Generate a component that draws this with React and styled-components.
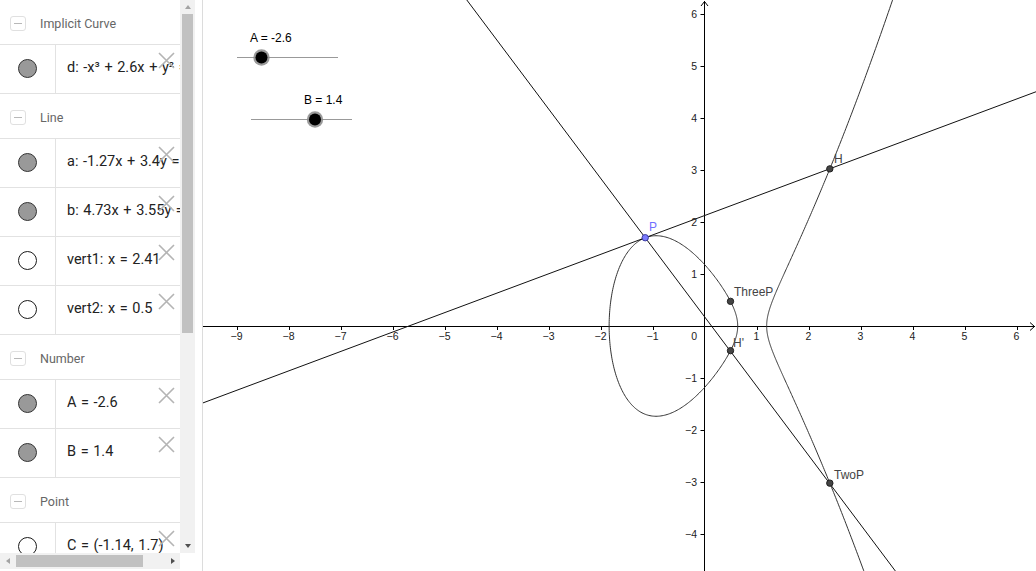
import React from "react";
import styled, { createGlobalStyle } from "styled-components";

const GlobalStyle = createGlobalStyle`
  html, body { margin: 0; padding: 0; background: #fff; overflow: hidden; }
  body { font-family: Roboto, "Liberation Sans", Arial, sans-serif; }
`;

const G = 203;
const W = 1036 - G;
const H = 571;
const S = 52;
const OX = 704.5 - G;
const OY = 326;
const sx = (x) => OX + S * x;
const sy = (y) => OY - S * y;

const f = (x) => x * x * x - 2.6 * x + 1.4;
const root = (a, b) => {
  let lo = a, hi = b;
  const flo = f(lo);
  for (let i = 0; i < 60; i++) {
    const m = (lo + hi) / 2;
    if (Math.sign(f(m)) === Math.sign(flo)) lo = m; else hi = m;
  }
  return (lo + hi) / 2;
};
const r1 = root(-2.2, -1.5);
const r2 = root(0.3, 0.9);
const r3 = root(1.0, 1.5);

const ovalPath = (() => {
  const N = 160;
  const up = [], down = [];
  for (let i = 0; i <= N; i++) {
    const t = (Math.PI * i) / N;
    const x = r1 + ((r2 - r1) * (1 - Math.cos(t))) / 2;
    const y = Math.sqrt(Math.max(0, f(x)));
    up.push([sx(x), sy(y)]);
    down.push([sx(x), sy(-y)]);
  }
  const pts = up.concat(down.reverse());
  return "M" + pts.map((p) => p[0].toFixed(2) + " " + p[1].toFixed(2)).join(" L") + " Z";
})();

const branchPath = (() => {
  const N = 200;
  const xmax = 3.9;
  const pts = [];
  for (let i = -N; i <= N; i++) {
    const s = i / N;
    const x = r3 + s * s * (xmax - r3);
    const y = Math.sign(s) * Math.sqrt(Math.max(0, f(x)));
    pts.push([sx(x), sy(y)]);
  }
  return "M" + pts.map((p) => p[0].toFixed(2) + " " + p[1].toFixed(2)).join(" L");
})();

// line a: -1.27x + 3.4y = 7.22 ; line b: 4.73x + 3.55y = 0.636
const lineA = (x) => (7.22 + 1.27 * x) / 3.4;
const lineB = (x) => (0.636 - 4.73 * x) / 3.55;
const xL = (0 - OX) / S;
const xR = (W - OX) / S;

const P = [-1.14, Math.sqrt(f(-1.14))];
const Hpt = [2.41, Math.sqrt(f(2.41))];
const ThreeP = [0.5, Math.sqrt(f(0.5))];
const Hp = [0.5, -Math.sqrt(f(0.5))];
const TwoP = [2.41, -Math.sqrt(f(2.41))];

const xTicks = [-9, -8, -7, -6, -5, -4, -3, -2, -1, 1, 2, 3, 4, 5, 6];
const yTicks = [-4, -3, -2, -1, 1, 2, 3, 4, 5, 6];

const Page = styled.div`
  display: flex;
  width: 1036px;
  height: 571px;
  background: #fff;
  overflow: hidden;
`;

const AlgebraView = styled.div`
  flex: none;
  width: 202px;
  height: 571px;
  border-right: 1px solid #dcdcdc;
  display: grid;
  grid-template-columns: 180px 15px 7px;
  grid-template-rows: 553px 16px 2px;
  background: #fff;
`;

const List = styled.div`
  grid-column: 1;
  grid-row: 1;
  overflow: hidden;
  display: flex;
  flex-direction: column;
`;

const GroupHeader = styled.div`
  flex: none;
  height: 45px;
  box-sizing: border-box;
  padding: 3px 0 0 10px;
  border-bottom: 1px solid #e2e2e2;
  display: flex;
  align-items: center;
  gap: 14px;
  color: #666;
  font-size: 12.5px;
  white-space: nowrap;
`;

const ToggleBox = styled.span`
  flex: none;
  width: 16px;
  height: 15px;
  box-sizing: border-box;
  border: 1px solid #e0e0e0;
  border-radius: 3px;
  display: flex;
  align-items: center;
  justify-content: center;
  &::before {
    content: "";
    width: 8px;
    height: 1.5px;
    background: #b8b8b8;
  }
`;

const ItemRow = styled.div`
  flex: none;
  position: relative;
  height: 49px;
  box-sizing: border-box;
  border-bottom: 1px solid #e2e2e2;
  display: flex;
  align-items: stretch;
`;

const MarbleCell = styled.div`
  flex: none;
  width: 56px;
  box-sizing: border-box;
  padding-bottom: 1px;
  border-right: 1px solid #e2e2e2;
  display: flex;
  align-items: center;
  justify-content: center;
`;

const Marble = styled.span`
  width: 19px;
  height: 19px;
  box-sizing: border-box;
  border-radius: 50%;
  border: 1px solid ${(p) => (p.$shown ? "#333" : "#1a1a1a")};
  background: ${(p) => (p.$shown ? "#999" : "#fff")};
`;

const ItemText = styled.div`
  align-self: center;
  padding: 0 0 3px 11px;
  white-space: nowrap;
  font-size: 14.5px;
  color: #222;
  word-spacing: 1px;
`;

const DeleteButton = styled.span`
  position: absolute;
  top: 7px;
  right: 5px;
  width: 17px;
  height: 17px;
  display: block;
`;

const VScroll = styled.div`
  grid-column: 2;
  grid-row: 1;
  background: #f1f1f1;
  display: flex;
  flex-direction: column;
  align-items: center;
`;

const ArrowBtn = styled.span`
  flex: none;
  width: 15px;
  height: 14px;
  display: flex;
  align-items: center;
  justify-content: center;
  &::before {
    content: "";
    width: 0;
    height: 0;
    ${(p) =>
      p.$dir === "up"
        ? `border-left: 3.5px solid transparent; border-right: 3.5px solid transparent; border-bottom: 4px solid ${p.$c};`
        : p.$dir === "down"
        ? `border-left: 3.5px solid transparent; border-right: 3.5px solid transparent; border-top: 4px solid ${p.$c};`
        : p.$dir === "left"
        ? `border-top: 3.5px solid transparent; border-bottom: 3.5px solid transparent; border-right: 4px solid ${p.$c};`
        : `border-top: 3.5px solid transparent; border-bottom: 3.5px solid transparent; border-left: 4px solid ${p.$c};`}
  }
`;

const VTrack = styled.div`
  flex: 1;
  width: 100%;
`;

const VThumb = styled.div`
  margin: 0 2px 0 2px;
  height: 319px;
  background: #c1c1c1;
`;

const HScroll = styled.div`
  grid-column: 1;
  grid-row: 2;
  background: #f1f1f1;
  display: flex;
  align-items: center;
`;

const HTrack = styled.div`
  flex: 1;
  height: 100%;
  display: flex;
  align-items: center;
`;

const HThumb = styled.div`
  margin-left: 1px;
  width: 127px;
  height: 12px;
  background: #c1c1c1;
`;

const Graphics = styled.div`
  flex: 1;
  height: 571px;
  overflow: hidden;
  background: #fff;
`;

const Canvas = styled.svg`
  display: block;
  font-family: "Liberation Sans", Arial, sans-serif;
`;

const DeleteIcon = () => (
  <DeleteButton>
    <svg width="17" height="17" viewBox="0 0 17 17">
      <path d="M1 1 L16 16 M16 1 L1 16" stroke="#b4b4b4" strokeWidth="1.6" fill="none" />
    </svg>
  </DeleteButton>
);

const Header = ({ children }) => (
  <GroupHeader>
    <ToggleBox />
    <span>{children}</span>
  </GroupHeader>
);

const Item = ({ shown, children }) => (
  <ItemRow>
    <MarbleCell>
      <Marble $shown={shown} />
    </MarbleCell>
    <ItemText>{children}</ItemText>
    <DeleteIcon />
  </ItemRow>
);

const Point = ({ p, fill = "#444", stroke = "#222", r = 3.2 }) => (
  <circle cx={sx(p[0])} cy={sy(p[1])} r={r} fill={fill} stroke={stroke} strokeWidth="1" />
);

const Slider = ({ x1, x2, y, knob, label, lx, ly }) => (
  <g>
    <text x={lx - G} y={ly} fontSize="12" fill="#000">{label}</text>
    <line x1={x1 - G} y1={y} x2={x2 - G} y2={y} stroke="#999" strokeWidth="1" />
    <circle cx={knob - G} cy={y} r="8.2" fill="#8a8a8a" opacity="0.85" />
    <circle cx={knob - G} cy={y} r="6" fill="#000" />
  </g>
);

export default function App() {
  return (
    <>
      <GlobalStyle />
      <Page>
        <AlgebraView>
          <List>
            <Header>Implicit Curve</Header>
            <Item shown>d: -x³ + 2.6x + y² = 1.4</Item>
            <Header>Line</Header>
            <Item shown>a: -1.27x + 3.4y = 7.22</Item>
            <Item shown>b: 4.73x + 3.55y = 0.64</Item>
            <Item>vert1: x = 2.41</Item>
            <Item>vert2: x = 0.5</Item>
            <Header>Number</Header>
            <Item shown>A = -2.6</Item>
            <Item shown>B = 1.4</Item>
            <Header>Point</Header>
            <Item>C = (-1.14, 1.7)</Item>
          </List>
          <VScroll>
            <ArrowBtn $dir="up" $c="#a3a3a3" />
            <VTrack>
              <VThumb />
            </VTrack>
            <ArrowBtn $dir="down" $c="#505050" />
          </VScroll>
          <HScroll>
            <ArrowBtn $dir="left" $c="#a3a3a3" />
            <HTrack>
              <HThumb />
            </HTrack>
            <ArrowBtn $dir="right" $c="#505050" />
          </HScroll>
        </AlgebraView>
        <Graphics>
          <Canvas width={W} height={H} viewBox={`0 0 ${W} ${H}`}>
            {/* axes */}
            <line x1="0" y1={OY + 0.5} x2={W - 1} y2={OY + 0.5} stroke="#000" strokeWidth="1" />
            <path d={`M${W - 6} ${OY - 3.5} L${W - 1.5} ${OY + 0.5} L${W - 6} ${OY + 4.5}`} stroke="#000" fill="none" strokeWidth="1" />
            <line x1={OX} y1="1" x2={OX} y2={H} stroke="#000" strokeWidth="1" />
            <path d={`M${OX - 3.5} 6 L${OX} 1.5 L${OX + 3.5} 6`} stroke="#000" fill="none" strokeWidth="1" />
            {xTicks.map((t) => (
              <g key={"x" + t}>
                <line x1={Math.round(sx(t)) + 0.5} y1={OY + 1} x2={Math.round(sx(t)) + 0.5} y2={OY + 4} stroke="#000" strokeWidth="1" />
                <text x={sx(t)} y={OY + 14} fontSize="10.5" fill="#222" textAnchor="middle">
                  {t < 0 ? "\u2212" + -t : String(t)}
                </text>
              </g>
            ))}
            {yTicks.map((t) => (
              <g key={"y" + t}>
                <line x1={OX - 4} y1={Math.round(sy(t)) + 0.5} x2={OX} y2={Math.round(sy(t)) + 0.5} stroke="#000" strokeWidth="1" />
                <text x={697 - G} y={sy(t) + 4} fontSize="10.5" fill="#222" textAnchor="end">
                  {t < 0 ? "\u2212" + -t : String(t)}
                </text>
              </g>
            ))}
            <text x={697 - G} y={OY + 14} fontSize="10.5" fill="#222" textAnchor="end">0</text>

            {/* curve */}
            <path d={ovalPath} stroke="#333" strokeWidth="1" fill="none" />
            <path d={branchPath} stroke="#333" strokeWidth="1" fill="none" />

            {/* lines */}
            <line x1={sx(xL)} y1={sy(lineA(xL))} x2={sx(xR)} y2={sy(lineA(xR))} stroke="#111" strokeWidth="1" />
            <line x1={sx(-6)} y1={sy(lineB(-6))} x2={sx(5)} y2={sy(lineB(5))} stroke="#111" strokeWidth="1" />

            {/* points */}
            <Point p={Hpt} />
            <Point p={ThreeP} />
            <Point p={Hp} />
            <Point p={TwoP} />
            <Point p={P} fill="#7b7bff" stroke="#3c3ca0" />

            <text x={834 - G} y="163" fontSize="12" fill="#444">H</text>
            <text x={734 - G} y="296" fontSize="12" fill="#444">ThreeP</text>
            <text x={733 - G} y="347" fontSize="12" fill="#444">H'</text>
            <text x={834 - G} y="479" fontSize="12" fill="#444">TwoP</text>
            <text x={649 - G} y="231" fontSize="12" fill="#7070ff">P</text>

            {/* sliders */}
            <Slider x1={237} x2={338} y={57.5} knob={261.5} label="A = -2.6" lx={250} ly={42} />
            <Slider x1={251} x2={352} y={119.5} knob={315} label="B = 1.4" lx={304} ly={104} />
          </Canvas>
        </Graphics>
      </Page>
    </>
  );
}
